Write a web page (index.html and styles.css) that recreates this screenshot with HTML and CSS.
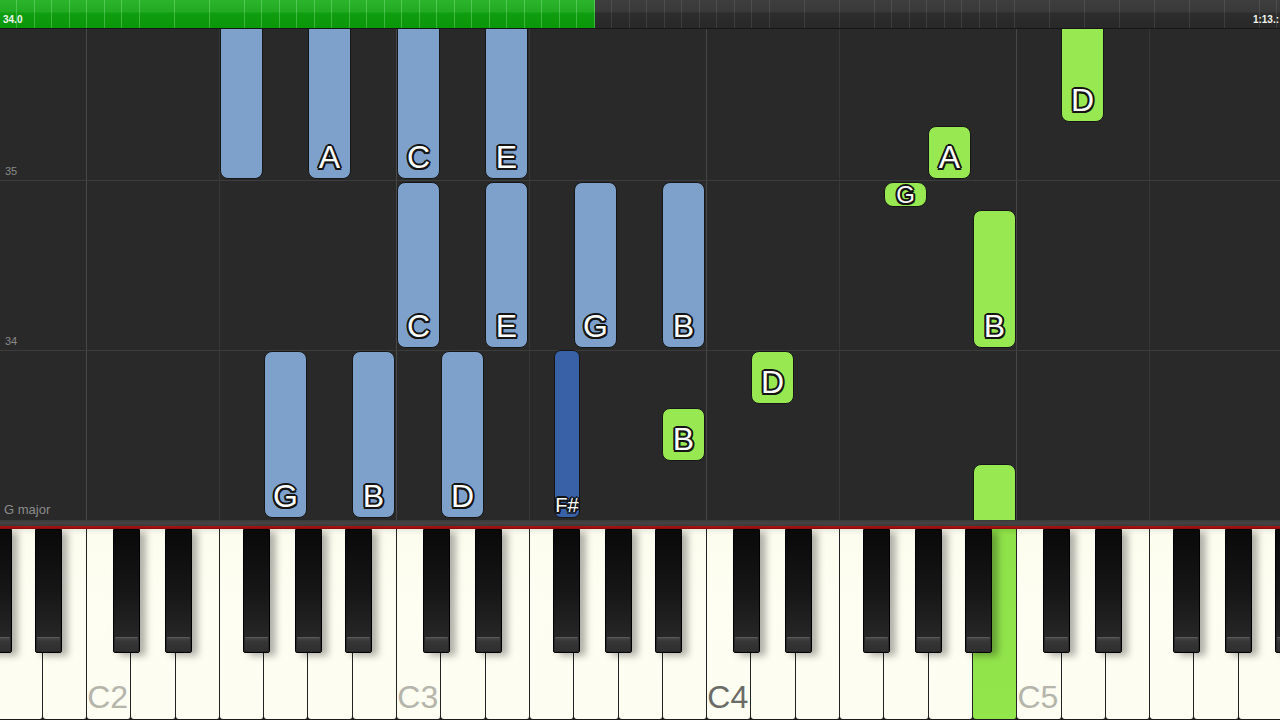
FILE: index.html
```html
<!DOCTYPE html>
<html>
<head>
<meta charset="utf-8">
<link rel="stylesheet" href="styles.css">
</head>
<body>
<div class="app">
  <div class="topbar">
    <div class="progress"><span class="t-left">34.0</span></div>
    <div class="rest"><span class="t-right">1:13.:</span></div>
  </div>
  <div class="roll">
    <div class="vl c x1"></div><div class="vl x2"></div><div class="vl c x3"></div><div class="vl x4"></div>
    <div class="vl c x5"></div><div class="vl x6"></div><div class="vl c x7"></div><div class="vl x8"></div>
    <div class="hl h1"></div><div class="hl h2"></div>
    <span class="mlabel m35">35</span>
    <span class="mlabel m34">34</span>
    <span class="keyname">G major</span>

    <div class="note blue n1"></div>
    <div class="note blue n2"><span>A</span></div>
    <div class="note blue n3"><span>C</span></div>
    <div class="note blue n4"><span>E</span></div>
    <div class="note blue n5"><span>C</span></div>
    <div class="note blue n6"><span>E</span></div>
    <div class="note blue n7"><span>G</span></div>
    <div class="note blue n8"><span>B</span></div>
    <div class="note blue n9"><span>G</span></div>
    <div class="note blue n10"><span>B</span></div>
    <div class="note blue n11"><span>D</span></div>
    <div class="note dark n12"><span>F#</span></div>

    <div class="note green n13"><span>D</span></div>
    <div class="note green n14"><span>A</span></div>
    <div class="note green small n15"><span>G</span></div>
    <div class="note green n16"><span>B</span></div>
    <div class="note green n17"><span>D</span></div>
    <div class="note green n18"><span>B</span></div>
    <div class="note green n19"></div>
  </div>
  <div class="kb-band"></div>
  <div class="kb-red"></div>
  <div class="keys">
    <div class="wk a"><div class="bk pre"></div><div class="bk"></div></div>
    <div class="wk b"></div>

    <div class="wk c"><div class="bk"></div><span class="cl">C2</span></div>
    <div class="wk d"><div class="bk"></div></div>
    <div class="wk e"></div>
    <div class="wk f"><div class="bk"></div></div>
    <div class="wk g"><div class="bk"></div></div>
    <div class="wk a"><div class="bk"></div></div>
    <div class="wk b"></div>

    <div class="wk c"><div class="bk"></div><span class="cl">C3</span></div>
    <div class="wk d"><div class="bk"></div></div>
    <div class="wk e"></div>
    <div class="wk f"><div class="bk"></div></div>
    <div class="wk g"><div class="bk"></div></div>
    <div class="wk a"><div class="bk"></div></div>
    <div class="wk b"></div>

    <div class="wk c"><div class="bk"></div><span class="cl mid">C4</span></div>
    <div class="wk d"><div class="bk"></div></div>
    <div class="wk e"></div>
    <div class="wk f"><div class="bk"></div></div>
    <div class="wk g"><div class="bk"></div></div>
    <div class="wk a"><div class="bk"></div></div>
    <div class="wk b lit"></div>

    <div class="wk c"><div class="bk"></div><span class="cl">C5</span></div>
    <div class="wk d"><div class="bk"></div></div>
    <div class="wk e"></div>
    <div class="wk f"><div class="bk"></div></div>
    <div class="wk g"><div class="bk"></div></div>
    <div class="wk a"><div class="bk"></div></div>
  </div>
</div>
</body>
</html>
```
FILE: styles.css
```css
* { box-sizing: border-box; margin: 0; padding: 0; }
html, body { width: 1280px; height: 720px; overflow: hidden; background: #292929; }
body { font-family: "Liberation Sans", Arial, sans-serif; }

.app { display: flex; flex-direction: column; width: 1280px; height: 720px; }

/* top progress bar */
.topbar {
  display: flex;
  height: 29px;
  flex: 0 0 29px;
  border-bottom: 1px solid #161616;
}
.progress {
  width: 595px;
  display: flex;
  align-items: flex-end;
  padding: 0 0 3px 3px;
  background:
    repeating-linear-gradient(to right, transparent 0 16.5px, rgba(190,255,190,0.28) 16.5px 17.5px),
    linear-gradient(#2cb42c 0, #22aa22 12px, #0f9e0f 13px, #0a970a 28px);
}
.rest {
  flex: 1;
  display: flex;
  align-items: flex-end;
  justify-content: flex-end;
  padding: 0 1px 3px 0;
  background:
    repeating-linear-gradient(to right, transparent 0 16.5px, rgba(255,255,255,0.09) 16.5px 17.5px),
    linear-gradient(#3e3e3e 0, #393939 12px, #2d2d2d 13px, #282828 28px);
}
.t-left, .t-right {
  font-size: 10px;
  line-height: 1;
  font-weight: bold;
  color: #eef5ee;
  white-space: nowrap;
}

/* piano roll */
.roll {
  position: relative;
  height: 491px;
  flex: 0 0 491px;
  overflow: hidden;
  background: #292929;
}
.vl { position: absolute; top: 0; bottom: 0; width: 1px; background: #373737; }
.vl.c { background: #474747; }
.x1 { left: 86px; }
.x2 { left: 219px; }
.x3 { left: 396px; }
.x4 { left: 529px; }
.x5 { left: 706px; }
.x6 { left: 839px; }
.x7 { left: 1016px; }
.x8 { left: 1149px; }
.hl { position: absolute; left: 0; right: 0; height: 1px; background: #3c3c3c; }
.h1 { top: 151px; }
.h2 { top: 321px; }

.mlabel {
  position: absolute;
  left: 5px;
  font-size: 11px;
  line-height: 1;
  color: #8a8a8a;
}
.m35 { top: 137px; }
.m34 { top: 307px; }
.keyname {
  position: absolute;
  left: 4px;
  top: 474px;
  font-size: 13px;
  line-height: 1;
  color: #8c8c8c;
}

.note {
  position: absolute;
  width: 43px;
  border: 1px solid #161616;
  border-radius: 8px;
  display: flex;
  align-items: flex-end;
  justify-content: center;
  padding-bottom: 5px;
  font-size: 32px;
  line-height: 1;
  color: #fff;
  text-shadow:
    -1.5px -1.5px 0 #141414, 1.5px -1.5px 0 #141414,
    -1.5px 1.5px 0 #141414, 1.5px 1.5px 0 #141414,
    0 -2px 0 #141414, 0 2px 0 #141414,
    -2px 0 0 #141414, 2px 0 0 #141414;
}
.note span { display: block; white-space: nowrap; }
.blue { background: #7ea1cc; }
.green { background: #97e851; }
.dark { background: #3961a7; width: 26px; font-size: 20px; padding-bottom: 2px; border-radius: 7px; }
.small { font-size: 24px; padding-bottom: 0; border-radius: 9px; }
.small span { margin-bottom: -1px; }

.n1  { left: 220px;  top: -19px; height: 169px; }
.n2  { left: 308px;  top: -19px; height: 169px; }
.n3  { left: 397px;  top: -19px; height: 169px; }
.n4  { left: 485px;  top: -19px; height: 169px; }
.n5  { left: 397px;  top: 153px; height: 166px; }
.n6  { left: 485px;  top: 153px; height: 166px; }
.n7  { left: 574px;  top: 153px; height: 166px; }
.n8  { left: 662px;  top: 153px; height: 166px; }
.n9  { left: 264px;  top: 322px; height: 167px; }
.n10 { left: 352px;  top: 322px; height: 167px; }
.n11 { left: 441px;  top: 322px; height: 167px; }
.n12 { left: 554px;  top: 321px; height: 168px; }
.n13 { left: 1061px; top: -19px; height: 112px; }
.n14 { left: 928px;  top: 97px;  height: 53px; }
.n15 { left: 884px;  top: 153px; height: 25px; }
.n16 { left: 973px;  top: 181px; height: 138px; }
.n17 { left: 751px;  top: 322px; height: 53px; }
.n18 { left: 662px;  top: 379px; height: 53px; }
.n19 { left: 973px;  top: 435px; height: 80px; }

/* keyboard */
.kb-band {
  flex: 0 0 6px;
  background: linear-gradient(#3a3a3a, #444 3px, #3a3a3a);
}
.kb-red {
  flex: 0 0 3px;
  background: linear-gradient(#b01616, #8a0b0b);
}
.keys {
  flex: 0 0 191px;
  display: flex;
  margin-left: -1.6px;
  background: #1c1c1c;
}
.wk {
  position: relative;
  flex: 0 0 44.3px;
  height: 190px;
  background: linear-gradient(#ecebdf 0, #fcfcef 6px, #fefef2 40%, #fdfdf1);
  border-right: 1px solid #232323;
  border-radius: 0 0 3px 3px;
  display: flex;
  align-items: flex-end;
  justify-content: center;
  padding-bottom: 6px;
}
.wk.lit { background: linear-gradient(#80d040 0, #90e24a 6px, #93e54c); }
.cl {
  font-size: 32px;
  line-height: 1;
  color: #b5b5ab;
  margin-left: -2px;
}
.cl.mid { color: #6b6b67; }

.bk {
  position: absolute;
  top: 0;
  width: 27px;
  height: 124px;
  z-index: 2;
  background: linear-gradient(#090909, #161616 50%, #262626 88%, #2a2a2a);
  border: 1px solid #000;
  border-radius: 0 0 2px 2px;
  box-shadow: 6px 3px 7px rgba(0, 0, 0, 0.3);
}
.bk::after {
  content: "";
  position: absolute;
  left: 1px;
  right: 1px;
  bottom: 1px;
  height: 13px;
  border-top: 1px solid #5a5a5a;
  background: linear-gradient(#454545, #353535 4px, #2f2f2f);
  border-radius: 1px;
}
.c .bk { left: 26px; }
.d .bk { left: 33.7px; }
.f .bk { left: 23.1px; }
.g .bk { left: 30.8px; }
.a .bk { left: 36.5px; }
.a .bk.pre { left: -13.5px; }
```
